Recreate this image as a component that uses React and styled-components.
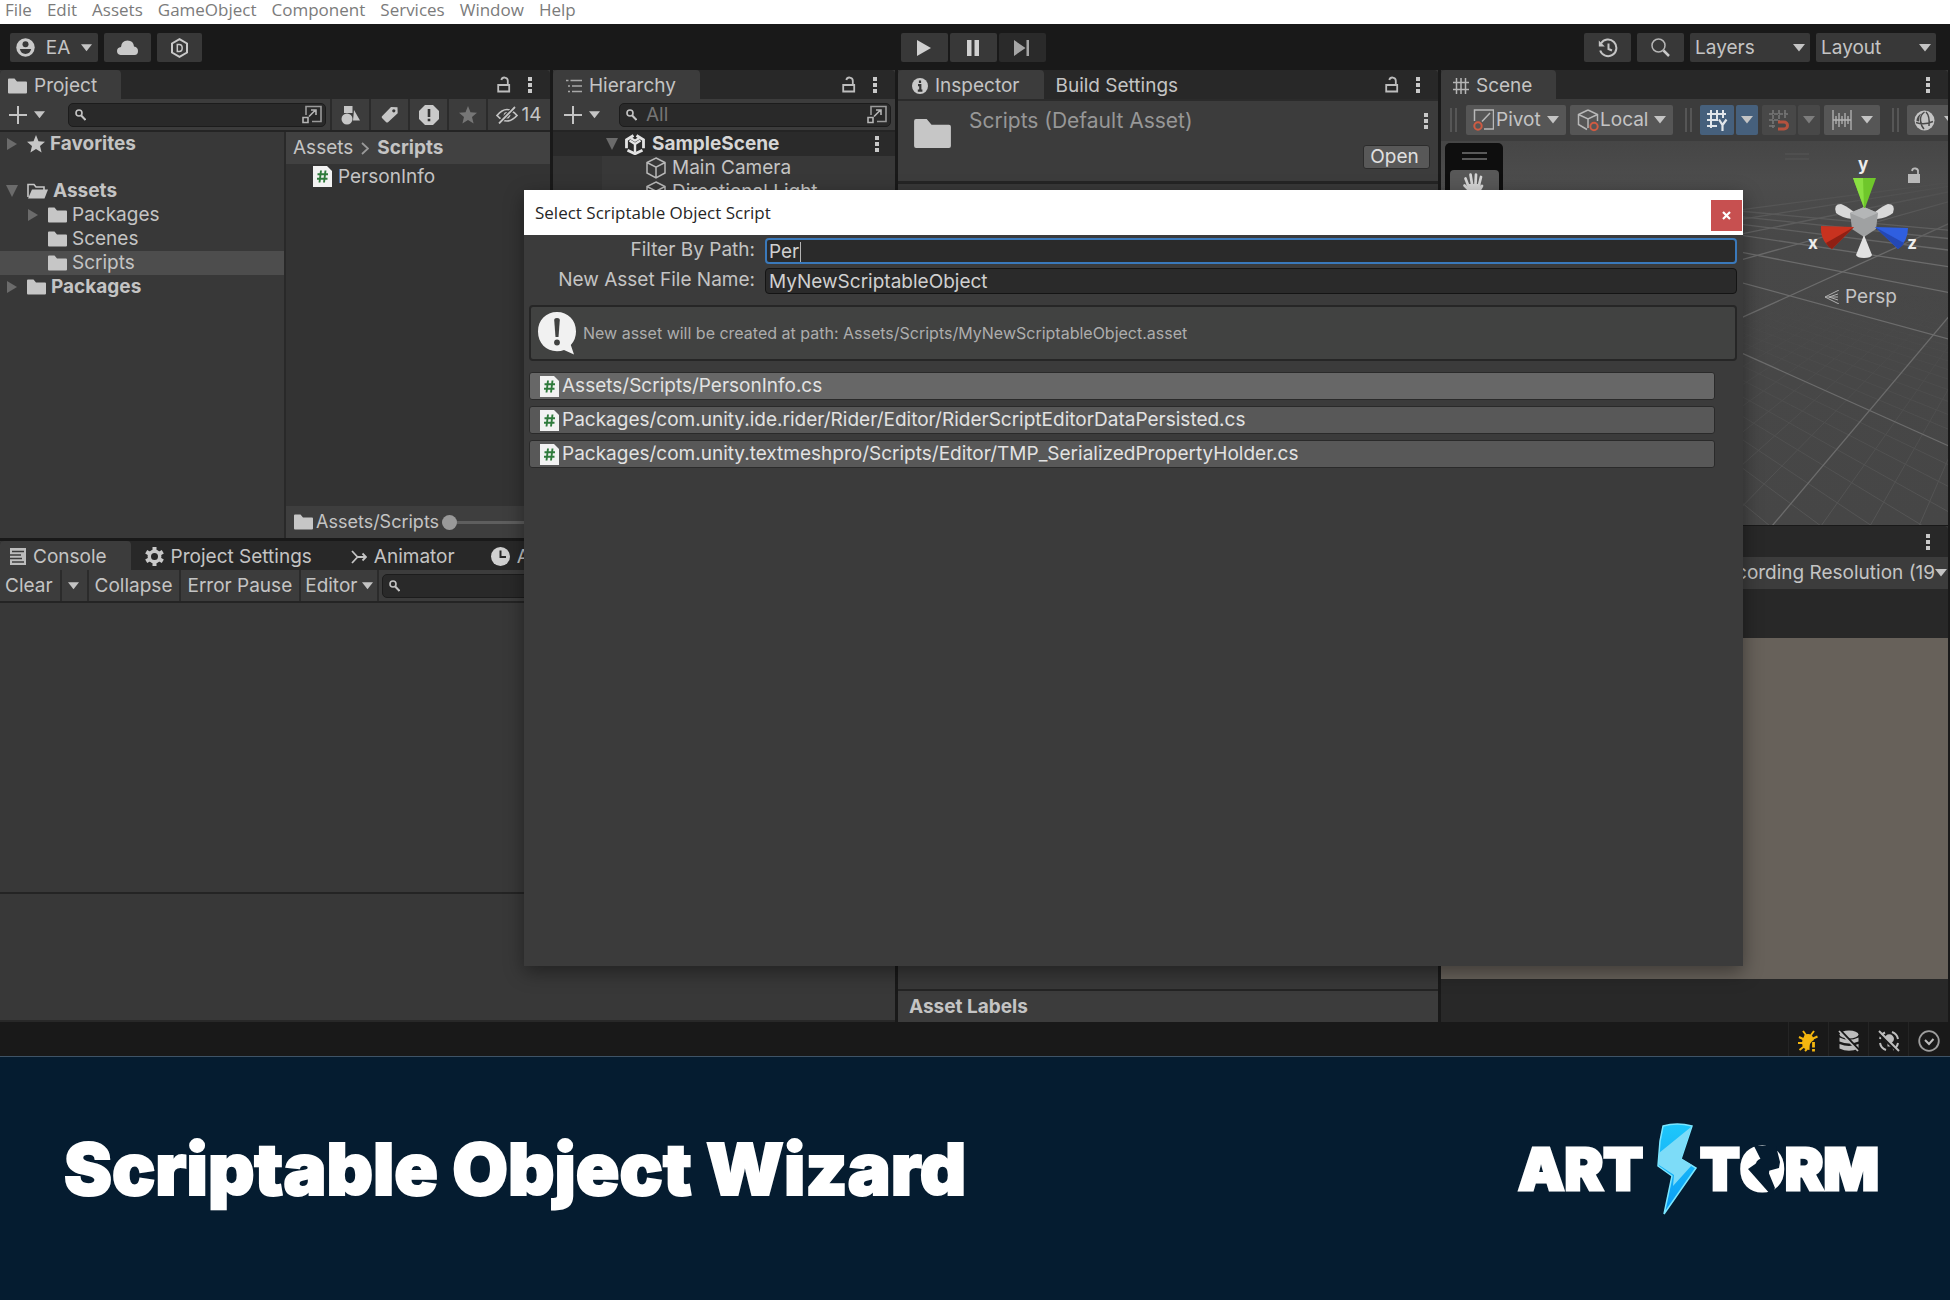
import React, { useState } from "react";
import styled, { createGlobalStyle, css } from "styled-components";

const GlobalStyle = createGlobalStyle`
  * {
    box-sizing: border-box;
  }
  body {
    margin: 0;
    background: #051c30;
    color: #c4c4c4;
    font-family: Inter, "Liberation Sans", sans-serif;
    font-size: 19px;
    line-height: 24px;
  }
  button,
  input,
  select {
    margin: 0;
    padding: 0;
    border: 0;
    background: none;
    color: inherit;
    font: inherit;
  }
  ul {
    margin: 0;
    padding: 0;
    list-style: none;
  }
  svg {
    display: block;
    flex: none;
  }
`;

/* ---------- icons ---------- */

const Icon = ({ w = 18, h = 18, box = "0 0 18 18", children, ...rest }) => (
  <svg width={w} height={h} viewBox={box} fill="none" aria-hidden="true" {...rest}>
    {children}
  </svg>
);

const Caret = ({ color = "#c4c4c4", w = 12 }) => (
  <Icon w={w} h={8} box="0 0 12 8">
    <path d="M0 0h12L6 7.5z" fill={color} />
  </Icon>
);

const Foldout = ({ open }) => (
  <Icon w={12} h={14} box="0 0 12 14">
    <path d={open ? "M0 1h12L6 13z" : "M1 1v12l10-6z"} fill="#6b6b6b" />
  </Icon>
);

const FolderIcon = ({ w = 19, h = 16 }) => (
  <Icon w={w} h={h} box="0 0 19 16">
    <path d="M0 1.500Q0 .5 1 .5h5.500L9 3.500h9q1 0 1 1V14.500q0 1-1 1H1q-1 0-1-1z" fill="#c6c6c6" />
  </Icon>
);

const FolderOpenIcon = () => (
  <Icon w={21} h={16} box="0 0 21 16">
    <path d="M1 14V1.500h6L9 4h8v3" stroke="#c6c6c6" strokeWidth="1.600" />
    <path d="M5 6.500h16L17.500 15.500H1z" fill="#c6c6c6" />
  </Icon>
);

const StarIcon = ({ color = "#c6c6c6" }) => (
  <Icon>
    <path d="M9 0l2.500 6.200 6.500.5-5 4.300 1.600 6.500L9 14l-5.600 3.500L5 11 0 6.700l6.500-.5z" fill={color} />
  </Icon>
);

const ScriptIcon = () => (
  <Icon w={19} h={21} box="0 0 19 21">
    <path d="M0 0h14l5 5v16H0z" fill="#f2f2f2" />
    <path d="M8 4.500L6.500 16.500M12.500 4.500L11 16.500M4.500 8.300h10.500M4 12.700h10.500" stroke="#2e7a3b" strokeWidth="1.900" />
  </Icon>
);

const LockIcon = () => (
  <Icon w={14} h={17} box="0 0 14 17">
    <path d="M1.200 9h11v6.500h-11zM10.800 9V4.800a3.300 3.300 0 0 0-6.500-.8" stroke="#bdbdbd" strokeWidth="1.800" />
  </Icon>
);

const DotsIcon = () => (
  <Icon w={4} h={18} box="0 0 4 18">
    <path d="M0 1h4v4H0zM0 7h4v4H0zM0 13h4v4H0z" fill="#c9c9c9" />
  </Icon>
);

const PlusIcon = () => (
  <Icon>
    <path d="M9 0v18M0 9h18" stroke="#c4c4c4" strokeWidth="2" />
  </Icon>
);

const SearchIcon = () => (
  <Icon w={11} h={12} box="0 0 11 12">
    <circle cx="4" cy="4" r="3" stroke="#c4c4c4" strokeWidth="1.600" />
    <path d="M6.200 6.500L10.500 11" stroke="#c4c4c4" strokeWidth="2" />
  </Icon>
);

const PopoutIcon = () => (
  <Icon w={20} h={19} box="0 0 20 19">
    <path d="M4 10V1.500h15v15h-9" stroke="#9a9a9a" strokeWidth="1.600" />
    <path d="M1 12.500h5v5H1zM7 11.500l6.500-6.500M9 5h5v5" stroke="#b5b5b5" strokeWidth="1.600" />
  </Icon>
);

const UserIcon = () => (
  <Icon w={19} h={19} box="0 0 19 19">
    <circle cx="9.500" cy="9.500" r="9.200" fill="#c9c9c9" />
    <circle cx="9.500" cy="6.200" r="3" fill="#383838" />
    <path d="M3.800 11h11.400c-.6 3.200-2.800 4.900-5.700 4.900S4.400 14.200 3.800 11z" fill="#383838" />
  </Icon>
);

const CloudIcon = () => (
  <Icon w={21} h={15} box="0 0 21 15">
    <path d="M3.500 15Q0 14.500 0 11t4-4Q4.500.5 10.500.5T17 6.500q4 .5 4 4.500t-3.500 4z" fill="#c9c9c9" />
  </Icon>
);

const DevOpsIcon = () => (
  <Icon w={19} h={20} box="0 0 19 20">
    <path d="M9.500 1.200l7.500 4.300v9l-7.500 4.300L2 14.500v-9z" stroke="#c9c9c9" strokeWidth="2" />
    <path d="M7.300 6.500h1.900q3 0 3 3.500t-3 3.500H7.300z" stroke="#c9c9c9" strokeWidth="1.500" />
  </Icon>
);

const PlayIcon = () => (
  <Icon w={14} h={16} box="0 0 14 16">
    <path d="M0 0l14 8-14 8z" fill="#d0d0d0" />
  </Icon>
);

const PauseIcon = () => (
  <Icon w={14} h={16} box="0 0 14 16">
    <path d="M1 0h4.500v16H1zM8.500 0H13v16H8.500z" fill="#d0d0d0" />
  </Icon>
);

const StepIcon = () => (
  <Icon w={16} h={16} box="0 0 16 16">
    <path d="M0 0l11.500 8L0 16zM12.500 0H15v16h-2.500z" fill="#a5a5a5" />
  </Icon>
);

const HistoryIcon = () => (
  <Icon w={20} h={20} box="0 0 20 20">
    <path d="M3 5.500a8.300 8.300 0 1 1-.8 7" stroke="#c4c4c4" strokeWidth="2" />
    <path d="M.8 2.500v6h6z" fill="#c4c4c4" />
    <path d="M10.500 5.500V11l3.500 1.500" stroke="#c4c4c4" strokeWidth="2" />
  </Icon>
);

const BigSearchIcon = () => (
  <Icon w={19} h={19} box="0 0 19 19">
    <circle cx="7.500" cy="7.500" r="6.500" stroke="#b5b5b5" strokeWidth="1.500" />
    <path d="M12.500 12.500l5.500 5.500" stroke="#c9c9c9" strokeWidth="2.500" />
  </Icon>
);

const ShapesIcon = () => (
  <Icon w={19} h={20} box="0 0 19 20">
    <path d="M3 1h8.500v7H3zM13 5l6 10.500h-7z" fill="#c6c6c6" />
    <circle cx="6" cy="14" r="5.500" fill="#c6c6c6" />
  </Icon>
);

const TagIcon = () => (
  <Icon w={17} h={17} box="0 0 17 17">
    <path d="M10 1l6.500.2.2 6L7 16.200q-1 .6-1.800 0L1 12q-.7-1 0-1.700z" fill="#c6c6c6" />
    <circle cx="12.800" cy="4.800" r="1.600" fill="#383838" />
  </Icon>
);

const AlertIcon = () => (
  <Icon w={20} h={20} box="0 0 20 20">
    <path d="M6 0h8l6 6v8l-6 6H6l-6-6V6z" fill="#c9c9c9" />
    <path d="M10 4v8M10 13.700v2.600" stroke="#333" strokeWidth="2.600" />
  </Icon>
);

const EyeOffIcon = () => (
  <Icon w={22} h={18} box="0 0 22 18">
    <path d="M1 9.500Q6 3.500 11 3.500t10 6q-5 5.500-10 5.500t-10-5.500z" stroke="#c4c4c4" strokeWidth="1.700" />
    <circle cx="11" cy="9.300" r="3.300" fill="#c4c4c4" />
    <path d="M3 17L19 1" stroke="#383838" strokeWidth="4" />
    <path d="M3 17.500L19 1" stroke="#c4c4c4" strokeWidth="1.800" />
  </Icon>
);

const ListIcon = () => (
  <Icon w={16} h={14} box="0 0 16 14">
    <path d="M0 1.500h2.500M4.500 1.500H16M2 7h2M6 7h10M2 12.500h2M6 12.500h10" stroke="#a8a8a8" strokeWidth="1.500" />
  </Icon>
);

const UnityIcon = () => (
  <Icon w={20} h={21} box="0 0 20 21">
    <path
      d="M8.500 1.500L1.500 5.700v8.500M11.500 1.500l7 4.200v8.500M2.500 16.200l7.500 3.600 7.500-3.600"
      stroke="#e4e4e4"
      strokeWidth="2.800"
    />
    <path d="M4.500 6.500L10 10v8M15.500 6.500L10 10M6 4.200l4 2.500 4-2.500" stroke="#e4e4e4" strokeWidth="2.400" />
  </Icon>
);

const CubeIcon = () => (
  <Icon w={20} h={22} box="0 0 20 22">
    <path d="M10 1l9 4.500v10.500L10 21l-9-5V5.500zM1 5.500l9 4.700 9-4.700M10 10.200V21" stroke="#b8b8b8" strokeWidth="1.500" />
  </Icon>
);

const InfoIcon = () => (
  <Icon w={16} h={16} box="0 0 16 16">
    <circle cx="8" cy="8" r="8" fill="#c9c9c9" />
    <path d="M8 2.500v2.600M6 7.200h2.300v5M5.800 12.600h4.600" stroke="#333" strokeWidth="2.200" />
  </Icon>
);

const HashIcon = () => (
  <Icon w={16} h={16} box="0 0 16 16">
    <path d="M3.500 0v16M8 0v16M12.500 0v16M0 4.500h16M0 11.500h16" stroke="#b5b5b5" strokeWidth="1.500" />
  </Icon>
);

const PivotIcon = () => (
  <Icon w={21} h={22} box="0 0 21 22">
    <path d="M1.500 12V1h19v19H11M9 12.500l8-8.500" stroke="#b8b8b8" strokeWidth="1.500" />
    <circle cx="5" cy="17" r="3.700" stroke="#cf5b42" strokeWidth="2" />
  </Icon>
);

const LocalIcon = () => (
  <Icon w={22} h={23} box="0 0 22 23">
    <path d="M11 1l9.500 4.500V12M11 1L1.500 5.500v10L10 20.500M1.500 5.500L11 10l9.500-4.500M11 10v9" stroke="#b8b8b8" strokeWidth="1.500" />
    <circle cx="17" cy="17.500" r="3.700" stroke="#cf5b42" strokeWidth="2" />
  </Icon>
);

const GridYIcon = () => (
  <Icon w={21} h={21} box="0 0 21 21">
    <path d="M4 0v18M10 0v11M16 0v8M0 4h19M0 10h11M0 16h10" stroke="#e2e6ea" strokeWidth="2" />
    <path d="M12 9.500l3.500 5.500 4-5.500M15.500 15v6" stroke="#e2e6ea" strokeWidth="2.200" />
  </Icon>
);

const MagnetIcon = () => (
  <Icon w={21} h={21} box="0 0 21 21">
    <path d="M4 0v18M10 0v11M16 0v8M0 4h19M0 10h9M0 16h6" stroke="#777" strokeWidth="1.600" strokeDasharray="4 1" />
    <path d="M9 12h6a3.500 3.500 0 0 1 0 7H9" stroke="#b5523e" strokeWidth="3" />
  </Icon>
);

const RulerIcon = () => (
  <Icon w={20} h={20} box="0 0 20 20">
    <path d="M1 0v20M19 0v20M4 6v8M7 3v14M10 6v8M13 3v14M16 6v8M1 10h18" stroke="#b5b5b5" strokeWidth="1.300" />
  </Icon>
);

const GlobeIcon = () => (
  <Icon w={21} h={21} box="0 0 21 21">
    <circle cx="10.500" cy="10.500" r="10" fill="#c4c4c4" />
    <path
      d="M10.500 2Q6 5 6.500 10.500T10 19M2 12.500q8 3 17-1M12 2q4 4 3 14"
      stroke="#4a4a4a"
      strokeWidth="1.500"
    />
    <path d="M2.500 11a8.500 8.500 0 0 1 5-7.500Q5 6 5 11.500z" fill="#4a4a4a" />
  </Icon>
);

const HandIcon = () => (
  <Icon w={24} h={26} box="0 0 24 26">
    <path
      d="M6 13L3.500 6.500M10 12L8.500 2.500M13.500 12l.5-9.500M17 13l2-8M7 18l-4.500-4.500M20 14l-3 5"
      stroke="#d5d5d5"
      strokeWidth="2.700"
      strokeLinecap="round"
    />
    <path d="M4.500 12h13.700l1 3.500L16 24H9z" fill="#d5d5d5" />
  </Icon>
);

const ConsoleIcon = () => (
  <Icon w={16} h={17} box="0 0 16 17">
    <path d="M0 0h16v17H0z" fill="#bdbdbd" />
    <path d="M2 3.500h12M0 7h11M0 10.500h12M2 14h12" stroke="#3c3c3c" strokeWidth="1.500" />
  </Icon>
);

const GearIcon = () => (
  <Icon w={19} h={19} box="0 0 19 19">
    <circle cx="9.500" cy="9.500" r="5.200" stroke="#c9c9c9" strokeWidth="3.400" />
    <path
      d="M9.500 0v3.500M9.500 15.500V19M1.200 4.700l3 1.800M14.800 12.500l3 1.800M1.200 14.300l3-1.800M14.800 6.500l3-1.800"
      stroke="#c9c9c9"
      strokeWidth="4"
    />
  </Icon>
);

const AnimatorIcon = () => (
  <Icon w={16} h={14} box="0 0 16 14">
    <path d="M1 1l5.500 6L1 13M6.500 7H15M11.500 3.500L15 7l-3.500 3.500" stroke="#c4c4c4" strokeWidth="1.800" />
  </Icon>
);

const ClockIcon = () => (
  <Icon w={19} h={19} box="0 0 19 19">
    <circle cx="9.500" cy="9.500" r="9.500" fill="#d0d0d0" />
    <path d="M9.500 3.500v6.500H15" stroke="#282828" strokeWidth="2" />
  </Icon>
);

const BubbleIcon = () => (
  <Icon w={40} h={44} box="0 0 40 44">
    <path d="M20 1C31 1 39 9 39 20.500q0 8-5.200 13.500L37 43.500l-10-4.500q-3 1.200-7 1.200C9 40.200 1 32 1 20.500S9 1 20 1z" fill="#f1f1f1" />
    <path d="M17.200 9q0-2 2.800-2t2.800 2L21.500 26h-3z" fill="#414241" />
    <circle cx="20" cy="31.500" r="2.900" fill="#414241" />
  </Icon>
);

const BugIcon = () => (
  <Icon w={21} h={22} box="0 0 21 22">
    <path d="M6 6.500Q6 4 10 4t4.500 2.500L16 10q-5 2-4.500 10Q4 20 4 12.500 4 9 6 6.500z" fill="#f5b70f" />
    <path d="M5 1l3 4M16 1l-3 4M1 7l5 2.500M19.500 6.500L14 9M0 13h5M1.500 20L6 16.500M7 21l2-2" stroke="#f5b70f" strokeWidth="2" />
    <path d="M15.500 12v5.500M15.500 19v2.500" stroke="#f5b70f" strokeWidth="2.800" />
  </Icon>
);

const DatabaseOffIcon = () => (
  <Icon w={22} h={22} box="0 0 22 22">
    <ellipse cx="11" cy="4.500" rx="9.500" ry="4" fill="#bdbdbd" />
    <path d="M1.500 7.500q9.500 4.500 19 0v4q-9.500 4-19 0zM1.500 14q9.500 4 19 0v4.500q-9.500 4.500-19 0z" fill="#bdbdbd" />
    <path d="M3 1l19 20" stroke="#191919" strokeWidth="2.500" />
    <path d="M1 1L20 21" stroke="#bdbdbd" strokeWidth="1.800" />
  </Icon>
);

const LightOffIcon = () => (
  <Icon w={22} h={22} box="0 0 22 22">
    <path d="M2 9a9.200 9.200 0 0 1 5-6.500M14 2a9.200 9.200 0 0 1 6 7M20 13a9.200 9.200 0 0 1-5 6.500M8 20a9.200 9.200 0 0 1-6-7" stroke="#bdbdbd" strokeWidth="2" />
    <path d="M6.500 9a4.700 4.700 0 0 1 9.500 0q0 2.500-2.500 4v3.500h-4V13q-3-1.500-3-4z" fill="#bdbdbd" />
    <path d="M0 3l19 18" stroke="#191919" strokeWidth="2.500" />
    <path d="M1 1l20 20" stroke="#bdbdbd" strokeWidth="2" />
  </Icon>
);

const CheckIcon = () => (
  <Icon w={22} h={22} box="0 0 22 22">
    <circle cx="11" cy="11" r="9.800" stroke="#9d9d9d" strokeWidth="1.800" />
    <path d="M7 10l4 4 4.500-5" stroke="#bdbdbd" strokeWidth="2" />
  </Icon>
);

const PerspIcon = () => (
  <Icon w={17} h={14} box="0 0 17 14">
    <path d="M15 0L1 7l14 7M1 7h13M5 7l9-3M5 7l9 3" stroke="#b0b0b0" strokeWidth="1" />
  </Icon>
);

/* ---------- shell ---------- */

const Page = styled.div`
  display: flex;
  flex-direction: column;
  min-height: 100vh;
`;

const Editor = styled.div`
  position: relative;
  display: flex;
  flex: 1;
  flex-direction: column;
  min-height: 900px;
  background: #191919;
  border-bottom: 1px solid #3f5366;
`;

const MenuBar = styled.nav`
  display: flex;
  gap: 15px;
  height: 24px;
  padding-left: 5px;
  background: #fff;
  color: #7b7b7b;
  font-family: "Open Sans", "Noto Sans", sans-serif;
  font-size: 17px;
  line-height: 20px;
`;

const MenuItem = styled.button`
  height: 20px;
`;

const MainToolbar = styled.div`
  display: grid;
  grid-template-columns: 1fr auto 1fr;
  align-items: center;
  height: 46px;
  padding: 1px 14px 0 10px;
`;

const ToolGroup = styled.div`
  display: flex;
  gap: ${(p) => p.$gap || 6}px;
  justify-content: ${(p) => (p.$end ? "flex-end" : "flex-start")};
`;

const ToolButton = styled.button`
  display: flex;
  align-items: center;
  justify-content: center;
  gap: 11px;
  width: ${(p) => p.$width}px;
  height: 29px;
  border-radius: 2px;
  background: ${(p) => (p.$dim ? "#2a2a2a" : "#383838")};
`;

/* select and caret share one grid cell */
const SelectFrame = styled.span`
  display: inline-grid;
  flex: none;
  align-items: center;
  width: ${(p) => p.$width}px;
  height: ${(p) => p.$height || 29}px;
  padding: 0 ${(p) => p.$pad || 0}px;
  border-radius: 2px;
  background: ${(p) => p.$bg || "transparent"};

  > * {
    grid-area: 1 / 1;
  }
  > svg {
    justify-self: start;
    pointer-events: none;
  }
  > svg:last-child {
    justify-self: end;
  }
`;

const Select = styled.select`
  width: 100%;
  height: 24px;
  padding-left: ${(p) => p.$indent || 0}px;
  padding-right: 12px;
  appearance: none;
  outline: none;
  overflow: hidden;
`;

const Dropdown = ({ label, value, icon, indent, caret, ...frame }) => (
  <SelectFrame {...frame}>
    <Select aria-label={label} $indent={indent} defaultValue={value}>
      <option>{value}</option>
    </Select>
    {icon}
    <Caret w={caret} />
  </SelectFrame>
);

const Workspace = styled.div`
  display: grid;
  flex: 1;
  grid-template-columns: minmax(0, 895fr) minmax(0, 540fr) minmax(0, 507fr);
  gap: 3px;
  min-height: 0;
  padding-right: 2px;
`;

const LeftDock = styled.div`
  display: grid;
  grid-template-columns: minmax(0, 550fr) minmax(0, 342fr);
  grid-template-rows: minmax(0, 468fr) minmax(0, 481fr);
  gap: 3px;
`;

const RightDock = styled.div`
  display: grid;
  grid-template-rows: minmax(0, 455fr) minmax(0, 496fr);
  gap: 1px;
`;

const Panel = styled.section`
  display: flex;
  flex-direction: column;
  min-width: 0;
  min-height: 0;
  overflow: hidden;
  background: #383838;
  ${(p) =>
    p.$wide &&
    css`
      grid-column: 1 / -1;
    `}
`;

const TabBar = styled.div`
  display: flex;
  align-items: stretch;
  flex: none;
  height: ${(p) => (p.$tall ? 31 : 29)}px;
  padding-right: 18px;
  border-radius: 4px 4px 0 0;
  background: #282828;
`;

const Tab = styled.button`
  display: flex;
  align-items: center;
  flex: none;
  gap: 7px;
  padding: 2px ${(p) => p.$right || 24}px 0 ${(p) => p.$left || 8}px;
  border-radius: 4px 4px 0 0;
  background: ${(p) => (p.$active ? "#3c3c3c" : "transparent")};
  white-space: nowrap;
`;

const TabActions = styled.div`
  display: flex;
  align-items: center;
  gap: 17px;
  margin-left: auto;
`;

const PlainButton = styled.button`
  display: flex;
  align-items: center;
  gap: 7px;
`;

const PanelToolbar = styled.div`
  display: flex;
  align-items: center;
  flex: none;
  height: 33px;
  padding-left: ${(p) => p.$left || 0}px;
  padding-right: ${(p) => p.$right || 0}px;
  border-bottom: 2px solid #242424;
  background: #3c3c3c;
`;

const SearchBox = styled.div`
  display: flex;
  align-items: center;
  flex: 1;
  gap: 9px;
  min-width: 0;
  height: 24px;
  margin: 0 ${(p) => p.$right || 0}px 0 ${(p) => p.$left || 0}px;
  padding: 0 3px 0 6px;
  border: 1px solid #1c1c1c;
  border-radius: 5px;
  background: #292929;

  input {
    flex: 1;
    min-width: 0;
    outline: none;
  }
  input::placeholder {
    color: #757575;
    opacity: 1;
  }
`;

const ToolCell = styled.button`
  display: flex;
  align-items: center;
  justify-content: center;
  gap: 3px;
  flex: none;
  width: ${(p) => p.$width || 39}px;
  height: 31px;
  border-left: 2px solid #2b2b2b;
`;

const ActionButton = ({ label, children, ...rest }) => (
  <PlainButton type="button" aria-label={label} {...rest}>
    {children}
  </PlainButton>
);

/* ---------- project ---------- */

const ProjectBody = styled.div`
  display: grid;
  grid-template-columns: 286px minmax(0, 1fr);
  flex: 1;
  min-height: 0;
`;

const Tree = styled.ul`
  border-right: 2px solid #292929;
`;

const TreeRow = styled.li`
  display: flex;
  align-items: center;
  gap: 5px;
  height: 24px;
  margin-top: ${(p) => (p.$spaced ? 23 : 0)}px;
  padding-left: ${(p) => 6 + (p.$depth || 0) * 21}px;
  background: ${(p) => (p.$selected ? "#4d4d4d" : "transparent")};
  font-weight: ${(p) => (p.$bold ? 700 : 400)};
`;

const FoldSlot = styled.span`
  width: 12px;
  margin-right: 4px;
`;

const Column = styled.div`
  display: flex;
  flex-direction: column;
  min-width: 0;
`;

const Breadcrumbs = styled.div`
  display: flex;
  align-items: center;
  gap: 8px;
  height: 32px;
  padding-left: 7px;
  background: #414141;
`;

const FileList = styled.ul`
  flex: 1;
  background: #333;
`;

const FileRow = styled.li`
  display: flex;
  align-items: center;
  gap: 6px;
  height: 25px;
  padding-left: 27px;
`;

const PathBar = styled.div`
  display: flex;
  align-items: center;
  gap: 3px;
  height: 32px;
  padding: 0 8px;
  background: #3e3e3e;
  font-size: 18px;
  white-space: nowrap;
`;

const ZoomSlider = styled.input`
  flex: 1;
  min-width: 0;
  height: 16px;
  appearance: none;

  &::-webkit-slider-runnable-track {
    height: 3px;
    background: #5e5e5e;
  }
  &::-webkit-slider-thumb {
    width: 15px;
    height: 15px;
    margin-top: -6px;
    appearance: none;
    border-radius: 50%;
    background: #999;
  }
`;

const TREE = [
  { name: "Favorites", icon: <StarIcon />, fold: "closed", bold: true },
  { name: "Assets", icon: <FolderOpenIcon />, fold: "open", bold: true, spaced: true },
  { name: "Packages", icon: <FolderIcon />, fold: "closed", depth: 1 },
  { name: "Scenes", icon: <FolderIcon />, depth: 1 },
  { name: "Scripts", icon: <FolderIcon />, depth: 1, selected: true },
  { name: "Packages", icon: <FolderIcon />, fold: "closed", bold: true },
];

const ProjectPanel = () => (
  <Panel>
    <TabBar>
      <Tab type="button" $active>
        <FolderIcon />
        Project
      </Tab>
      <TabActions>
        <ActionButton label="Lock project">
          <LockIcon />
        </ActionButton>
        <ActionButton label="Project menu">
          <DotsIcon />
        </ActionButton>
      </TabActions>
    </TabBar>
    <PanelToolbar $left={9}>
      <ActionButton label="Create asset">
        <PlusIcon />
        <Caret w={11} />
      </ActionButton>
      <SearchBox $left={23} $right={4}>
        <SearchIcon />
        <input type="search" aria-label="Search project" />
        <PopoutIcon />
      </SearchBox>
      <ToolCell type="button" aria-label="Search by type">
        <ShapesIcon />
      </ToolCell>
      <ToolCell type="button" aria-label="Search by label">
        <TagIcon />
      </ToolCell>
      <ToolCell type="button" aria-label="Search by import log">
        <AlertIcon />
      </ToolCell>
      <ToolCell type="button" aria-label="Save search">
        <StarIcon color="#767676" />
      </ToolCell>
      <ToolCell type="button" $width={64}>
        <EyeOffIcon />
        14
      </ToolCell>
    </PanelToolbar>
    <ProjectBody>
      <Tree>
        {TREE.map((row, i) => (
          <TreeRow key={i} $depth={row.depth} $bold={row.bold} $spaced={row.spaced} $selected={row.selected}>
            <FoldSlot>{row.fold && <Foldout open={row.fold === "open"} />}</FoldSlot>
            {row.icon}
            {row.name}
          </TreeRow>
        ))}
      </Tree>
      <Column>
        <Breadcrumbs>
          <span>Assets</span>
          <Icon w={8} h={13} box="0 0 8 13">
            <path d="M1 1l6 5.500L1 12" stroke="#9a9a9a" strokeWidth="1.800" />
          </Icon>
          <strong>Scripts</strong>
        </Breadcrumbs>
        <FileList>
          <FileRow>
            <ScriptIcon />
            PersonInfo
          </FileRow>
        </FileList>
        <PathBar>
          <FolderIcon />
          Assets/Scripts
          <ZoomSlider type="range" aria-label="Icon size" min="0" max="100" defaultValue="0" />
        </PathBar>
      </Column>
    </ProjectBody>
  </Panel>
);

/* ---------- hierarchy ---------- */

const SceneRow = styled.div`
  display: flex;
  align-items: center;
  gap: 7px;
  height: 24px;
  padding: 0 16px 0 53px;
  background: #2a2a2a;
  color: #d6d6d6;
  font-weight: 700;

  > button {
    margin-left: auto;
  }
`;

const ObjectRow = styled.li`
  display: flex;
  align-items: center;
  gap: 6px;
  height: 24px;
  padding-left: 44px;
  border-left: 49px solid #333;
`;

const HierarchyPanel = () => (
  <Panel>
    <TabBar>
      <Tab type="button" $active $left={13}>
        <ListIcon />
        Hierarchy
      </Tab>
      <TabActions>
        <ActionButton label="Lock hierarchy">
          <LockIcon />
        </ActionButton>
        <ActionButton label="Hierarchy menu">
          <DotsIcon />
        </ActionButton>
      </TabActions>
    </TabBar>
    <PanelToolbar $left={11} $right={4}>
      <ActionButton label="Create object">
        <PlusIcon />
        <Caret w={11} />
      </ActionButton>
      <SearchBox $left={19}>
        <SearchIcon />
        <input type="search" aria-label="Search hierarchy" placeholder="All" />
        <PopoutIcon />
      </SearchBox>
    </PanelToolbar>
    <SceneRow>
      <Foldout open />
      <UnityIcon />
      SampleScene
      <ActionButton label="Scene options">
        <DotsIcon />
      </ActionButton>
    </SceneRow>
    <ul>
      {["Main Camera", "Directional Light"].map((name) => (
        <ObjectRow key={name}>
          <CubeIcon />
          {name}
        </ObjectRow>
      ))}
    </ul>
  </Panel>
);

/* ---------- console ---------- */

const ConsoleButton = styled.button`
  flex: none;
  height: 31px;
  padding: 0 7px 0 ${(p) => (p.$first ? 0 : 6)}px;
  border-right: 2px solid #2b2b2b;
`;

const ClearMenu = styled.button`
  height: 24px;
  padding: 0 8px 0 6px;
`;

const Divider = styled.span`
  flex: none;
  width: 2px;
  height: 31px;
  background: #2b2b2b;
`;

const LogList = styled.div`
  flex: 291;
`;

const LogDetail = styled.div`
  flex: 127;
  border-top: 2px solid #242424;
  border-bottom: 2px solid #282828;
`;

const ConsolePanel = () => (
  <Panel $wide>
    <TabBar>
      <Tab type="button" $active $left={10}>
        <ConsoleIcon />
        Console
      </Tab>
      <Tab type="button" $left={14}>
        <GearIcon />
        Project Settings
      </Tab>
      <Tab type="button" $left={15}>
        <AnimatorIcon />
        Animator
      </Tab>
      <Tab type="button" $left={12}>
        <ClockIcon />
        Animation
      </Tab>
    </TabBar>
    <PanelToolbar $left={5} $right={4}>
      <ConsoleButton type="button" $first>
        Clear
      </ConsoleButton>
      <ClearMenu type="button" aria-label="Clear options">
        <Caret w={11} />
      </ClearMenu>
      <Divider />
      <ConsoleButton type="button">Collapse</ConsoleButton>
      <ConsoleButton type="button">Error Pause</ConsoleButton>
      <Dropdown label="Console target" value="Editor" caret={11} $width={76} $pad={4} />
      <Divider />
      <SearchBox $left={3}>
        <SearchIcon />
        <input type="search" aria-label="Search console" />
      </SearchBox>
    </PanelToolbar>
    <LogList />
    <LogDetail />
  </Panel>
);

/* ---------- inspector ---------- */

const AssetHeader = styled.div`
  display: grid;
  grid-template-columns: 37px 1fr auto;
  grid-template-rows: 24px 24px;
  align-content: start;
  column-gap: 18px;
  row-gap: 12px;
  height: 85px;
  padding: 8px 8px 0 16px;
  border-top: 2px solid #2b2b2b;
  border-bottom: 3px solid #242424;
  background: #3c3c3c;
`;

const AssetIcon = styled.div`
  grid-row: 1 / 3;
  padding-top: 9px;
`;

const AssetName = styled.div`
  color: #979797;
  font-size: 21px;
`;

const HeaderMenu = styled(ActionButton)`
  justify-self: end;
  margin-right: 2px;
`;

const OpenButton = styled.button`
  grid-column: 3;
  width: 67px;
  padding-right: 4px;
  border: 1px solid #2c2c2c;
  border-radius: 3px;
  background: #585858;
  color: #e0e0e0;
  line-height: 22px;
`;

const InspectorBody = styled.div`
  flex: 1;
`;

const AssetLabels = styled.h2`
  height: 33px;
  margin: 0;
  padding: 4px 11px;
  border-top: 2px solid #242424;
  background: #3c3c3c;
  font-size: 19px;
  font-weight: 700;
`;

const InspectorPanel = () => (
  <Panel>
    <TabBar>
      <Tab type="button" $active $left={14}>
        <InfoIcon />
        Inspector
      </Tab>
      <Tab type="button" $left={12}>
        Build Settings
      </Tab>
      <TabActions>
        <ActionButton label="Lock inspector">
          <LockIcon />
        </ActionButton>
        <ActionButton label="Inspector menu">
          <DotsIcon />
        </ActionButton>
      </TabActions>
    </TabBar>
    <AssetHeader>
      <AssetIcon>
        <FolderIcon w={37} h={31} />
      </AssetIcon>
      <AssetName>Scripts (Default Asset)</AssetName>
      <HeaderMenu label="Asset menu">
        <DotsIcon />
      </HeaderMenu>
      <OpenButton type="button">Open</OpenButton>
    </AssetHeader>
    <InspectorBody />
    <AssetLabels>Asset Labels</AssetLabels>
  </Panel>
);

/* ---------- scene and game ---------- */

const SceneToolbar = styled.div`
  display: flex;
  align-items: center;
  flex: none;
  gap: 4px;
  height: 42px;
  padding: 0 0 0 9px;
  overflow: hidden;
  background: #3c3c3c;
`;

const Grip = styled.span`
  flex: none;
  width: 7px;
  height: 24px;
  margin: 0 ${(p) => (p.$first ? 5 : 4)}px 0 ${(p) => (p.$first ? 0 : 8)}px;
  border: solid #565656;
  border-width: 0 2px;
`;

const Split = styled.div`
  display: flex;
  flex: none;
  gap: 2px;
  height: 30px;
`;

const SplitPart = styled.button`
  display: flex;
  align-items: center;
  justify-content: center;
  gap: 9px;
  width: ${(p) => p.$width}px;
  border-radius: 2px;
  background: ${(p) => (p.$on ? "#46607c" : p.$dim ? "#484848" : "#565656")};
`;

const Viewport = styled.div`
  position: relative;
  flex: 1;
  min-height: 0;
  overflow: hidden;
  background: #474747;
`;

const ViewCanvas = styled.svg`
  position: absolute;
  inset: 0;
  width: 100%;
  height: 100%;

  text {
    fill: #ececec;
    font-weight: 700;
    font-size: 17px;
    text-anchor: middle;
  }
`;

const ViewTools = styled.div`
  position: absolute;
  top: 2px;
  left: 4px;
  display: flex;
  flex-direction: column;
  align-items: center;
  gap: 10px;
  width: 58px;
  height: 120px;
  padding-top: 9px;
  border-radius: 5px;
  background: #0e0e0e;
`;

const ToolsGrip = styled.span`
  width: 25px;
  height: 8px;
  border: solid #5a5a5a;
  border-width: 2px 0;
`;

const HandButton = styled.button`
  display: flex;
  justify-content: center;
  width: 49px;
  height: 40px;
  padding-top: 2px;
  border-radius: 4px;
  background: #585858;
`;

const PerspButton = styled.button`
  position: absolute;
  top: 144px;
  right: 51px;
  display: flex;
  align-items: center;
  gap: 4px;
`;

// floor lines run to two vanishing points on the horizon
const floorLines = [];
for (let i = -10; i < 70; i += 1) {
  floorLines.push({ key: `a${i}`, x1: -96, y1: 34, x2: 686 + i * 51, y2: 385, major: i % 10 === 0 });
}
for (let i = -10; i < 60; i += 1) {
  floorLines.push({ key: `b${i}`, x1: 635, y1: 25, x2: 331 - i * 49, y2: 385, major: i % 10 === 0 });
}

const SceneCanvas = () => (
  <ViewCanvas viewBox="0 0 507 385" preserveAspectRatio="xMaxYMin slice" role="img" aria-label="Scene view">
    <defs>
      <linearGradient id="sky" x1="0" y1="0" x2="0" y2="1">
        <stop offset="0" stopColor="#464646" />
        <stop offset="0.1" stopColor="#4c4c4c" />
        <stop offset="0.25" stopColor="#484848" />
        <stop offset="1" stopColor="#464646" />
      </linearGradient>
      <linearGradient id="minorFade" x1="0" y1="0" x2="0" y2="1">
        <stop offset="0.4" stopColor="#000" />
        <stop offset="1" stopColor="#bbb" />
      </linearGradient>
      <linearGradient id="majorFade" x1="0" y1="0" x2="0" y2="1">
        <stop offset="0.1" stopColor="#000" />
        <stop offset="0.3" stopColor="#fff" />
      </linearGradient>
      <mask id="minorMask">
        <rect width="507" height="385" fill="url(#minorFade)" />
      </mask>
      <mask id="majorMask">
        <rect width="507" height="385" fill="url(#majorFade)" />
      </mask>
    </defs>
    <rect width="507" height="385" fill="url(#sky)" />
    <g mask="url(#minorMask)" stroke="#5c5c5c">
      {floorLines
        .filter((l) => !l.major)
        .map(({ key, major, ...l }) => (
          <line key={key} {...l} />
        ))}
    </g>
    <g mask="url(#majorMask)" stroke="#6c6c6c" strokeWidth="1.300">
      {floorLines
        .filter((l) => l.major)
        .map(({ key, major, ...l }) => (
          <line key={key} {...l} />
        ))}
    </g>
    <path d="M344 13h24M344 18h24" stroke="#515151" strokeWidth="1.500" />
    <path d="M395 72q-3-9 5-9 4 1 13 8l-2 7q-10-1-16-6z" fill="#d9d9d9" />
    <path d="M452 72q3-9-5-9-4 1-13 8l2 7q10-1 16-6z" fill="#d9d9d9" />
    <path d="M423 66l14 6-2 16-12 8-12-8-2-16z" fill="#9fa1a2" />
    <path d="M409 72l14-6 14 6-14 6z" fill="#b4b6b7" />
    <path d="M412 37h23l-11 30h-1z" fill="#6fc72b" />
    <path d="M412 37h10l1 30z" fill="#8adf42" />
    <path d="M423 94l8 20q-1 3-8 3t-8-3z" fill="#e2e2e2" />
    <path d="M413 86l-33-1q-1 15 11 23z" fill="#c8321f" />
    <path d="M413 86l-22 22q-4-2-6-6z" fill="#8f2014" />
    <path d="M434 86l33 1q0 13-10 21z" fill="#2f5fe0" />
    <path d="M434 86l23 22q5-3 6-6z" fill="#2448b5" />
    <path d="M467 33h12v9h-12z" fill="#b9b9b9" />
    <path d="M477 34v-3a3 3 0 0 0-6-1" stroke="#b9b9b9" strokeWidth="1.800" fill="none" />
    <text x="422" y="29">y</text>
    <text x="372" y="108">x</text>
    <text x="471" y="108">z</text>
  </ViewCanvas>
);

const ScenePanel = () => (
  <Panel>
    <TabBar>
      <Tab type="button" $active $left={12}>
        <HashIcon />
        Scene
      </Tab>
      <TabActions>
        <ActionButton label="Scene menu">
          <DotsIcon />
        </ActionButton>
      </TabActions>
    </TabBar>
    <SceneToolbar>
      <Grip $first />
      <Dropdown label="Tool handle position" value="Pivot" icon={<PivotIcon />} indent={23} $width={100} $height={30} $pad={7} $bg="#565656" />
      <Dropdown label="Tool handle rotation" value="Local" icon={<LocalIcon />} indent={23} $width={103} $height={30} $pad={7} $bg="#565656" />
      <Grip />
      <Split>
        <SplitPart type="button" aria-label="Grid snapping" $on $width={34}>
          <GridYIcon />
        </SplitPart>
        <SplitPart type="button" aria-label="Grid options" $on $width={22}>
          <Caret />
        </SplitPart>
      </Split>
      <Split>
        <SplitPart type="button" aria-label="Snap to grid" $dim $width={34}>
          <MagnetIcon />
        </SplitPart>
        <SplitPart type="button" aria-label="Snap options" $dim $width={22}>
          <Caret color="#7d7d7d" />
        </SplitPart>
      </Split>
      <Split>
        <SplitPart type="button" aria-label="Snap increment" $width={56}>
          <RulerIcon />
          <Caret />
        </SplitPart>
      </Split>
      <Grip />
      <Split>
        <SplitPart type="button" aria-label="Draw mode" $width={56}>
          <GlobeIcon />
          <Caret />
        </SplitPart>
      </Split>
    </SceneToolbar>
    <Viewport>
      <SceneCanvas />
      <ViewTools>
        <ToolsGrip />
        <HandButton type="button" aria-label="View tool">
          <HandIcon />
        </HandButton>
      </ViewTools>
      <PerspButton type="button">
        <PerspIcon />
        Persp
      </PerspButton>
    </Viewport>
  </Panel>
);

const GameBar = styled.div`
  display: flex;
  justify-content: flex-end;
  flex: none;
  height: 32px;
  background: #3c3c3c;
`;

const GameView = styled.div`
  display: grid;
  flex: 1;
  grid-template-rows: 49fr 341fr 43fr;
  background: #282828;
`;

const GameFrame = styled.div`
  grid-row: 2;
  background: #67615a;
`;

const GamePanel = () => (
  <Panel>
    <TabBar $tall>
      <TabActions>
        <ActionButton label="Game menu">
          <DotsIcon />
        </ActionButton>
      </TabActions>
    </TabBar>
    <GameBar>
      <Dropdown label="Game resolution" value="Recording Resolution (1920x1080)" $width={236} $height={32} $pad={1} />
    </GameBar>
    <GameView>
      <GameFrame />
    </GameView>
  </Panel>
);

const StatusBar = styled.footer`
  display: flex;
  justify-content: flex-end;
  flex: none;
  height: 34px;
  padding-right: 2px;
`;

const StatusButton = styled.button`
  display: flex;
  align-items: center;
  justify-content: center;
  width: 40px;
  padding-top: 3px;
  border-left: 1px solid #242424;
`;

/* ---------- script picker ---------- */

const Dialog = styled.div`
  position: absolute;
  top: 190px;
  right: 207px;
  bottom: 90px;
  left: 524px;
  background: #3b3b3b;
  box-shadow: 0 6px 18px rgba(0, 0, 0, 0.4);
`;

const DialogTitle = styled.header`
  display: flex;
  align-items: center;
  justify-content: space-between;
  height: 45px;
  padding: 0 1px 0 11px;
  background: #fff;
  color: #262626;
  font-family: "Open Sans", "Noto Sans", sans-serif;
  font-size: 17px;
`;

const CloseButton = styled.button`
  display: grid;
  align-self: flex-end;
  place-items: center;
  width: 31px;
  height: 31px;
  margin-bottom: 4px;
  background: #c75050;
`;

const DialogBody = styled.div`
  display: flex;
  flex-direction: column;
  gap: 11px;
  padding: 3px 6px 0 5px;
`;

const Fields = styled.form`
  display: grid;
  grid-template-columns: 226px 1fr;
  gap: 4px 10px;

  label {
    text-align: right;
  }
`;

const FieldFrame = styled.div`
  position: relative;
  display: grid;
`;

const TextField = styled.input`
  height: 26px;
  padding: 0 3px;
  border: 1px solid #141414;
  border-radius: 4px;
  background: #2a2a2a;
  color: #d0d0d0;
  outline: none;

  &:focus {
    padding: 0 2px;
    border: 2px solid #3a79bb;
  }
`;

const TextCursor = styled.span`
  position: absolute;
  top: 4px;
  bottom: 2px;
  left: 35px;
  width: 1px;
  background: #b4b4b4;
`;

const HelpBox = styled.div`
  display: flex;
  align-items: center;
  gap: 6px;
  height: 56px;
  padding-left: 6px;
  border: 2px solid #262626;
  border-radius: 4px;
  background: #414241;
  color: #adadad;
  font-size: 16px;
`;

const ScriptList = styled.ul`
  display: grid;
  gap: 6px;
  padding-right: 22px;
`;

const ScriptButton = styled.button`
  display: flex;
  align-items: center;
  gap: 3px;
  width: 100%;
  height: 28px;
  padding-left: 10px;
  border: 1px solid #2a2a2a;
  border-radius: 3px;
  background: ${(p) => (p.$hover ? "#676767" : "#585858")};
  color: #e2e2e2;
`;

const SCRIPTS = [
  "Assets/Scripts/PersonInfo.cs",
  "Packages/com.unity.ide.rider/Rider/Editor/RiderScriptEditorDataPersisted.cs",
  "Packages/com.unity.textmeshpro/Scripts/Editor/TMP_SerializedPropertyHolder.cs",
];

const ScriptPicker = () => {
  const [filter, setFilter] = useState("Per");
  const [touched, setTouched] = useState(false);
  const [fileName, setFileName] = useState("MyNewScriptableObject");
  const matches = SCRIPTS.filter((path) => path.toLowerCase().includes(filter.toLowerCase()));

  return (
    <Dialog role="dialog" aria-labelledby="picker-title">
      <DialogTitle>
        <span id="picker-title">Select Scriptable Object Script</span>
        <CloseButton type="button" aria-label="Close">
          <Icon w={9} h={9} box="0 0 9 9">
            <path d="M1 1l7 7M8 1L1 8" stroke="#fff" strokeWidth="2.200" />
          </Icon>
        </CloseButton>
      </DialogTitle>
      <DialogBody>
        <Fields onSubmit={(e) => e.preventDefault()}>
          <label htmlFor="filter">Filter By Path:</label>
          <FieldFrame>
            <TextField
              id="filter"
              autoFocus
              value={filter}
              onKeyDown={() => setTouched(true)}
              onChange={(e) => setFilter(e.target.value)}
            />
            {!touched && <TextCursor />}
          </FieldFrame>
          <label htmlFor="file-name">New Asset File Name:</label>
          <TextField id="file-name" value={fileName} onChange={(e) => setFileName(e.target.value)} />
        </Fields>
        <HelpBox>
          <BubbleIcon />
          New asset will be created at path: Assets/Scripts/{fileName}.asset
        </HelpBox>
        <ScriptList>
          {matches.map((path, i) => (
            <li key={path}>
              <ScriptButton type="button" $hover={i === 0}>
                <ScriptIcon />
                {path}
              </ScriptButton>
            </li>
          ))}
        </ScriptList>
      </DialogBody>
    </Dialog>
  );
};

/* ---------- banner ---------- */

const Banner = styled.section`
  display: flex;
  align-items: center;
  justify-content: space-between;
  flex: none;
  height: 243px;
  padding: 0 71px 20px 64px;
  background: #051c30;
  color: #fff;
  font-weight: 900;
`;

const BannerTitle = styled.h1`
  margin: 0;
  font-size: 72px;
  font-weight: 900;
  line-height: 80px;
  -webkit-text-stroke: 2px #fff;
`;

const Logo = styled.div`
  display: flex;
  align-items: center;
  font-size: 58px;
  line-height: 92px;
  -webkit-text-stroke: 3px #fff;
`;

const Bolt = styled.svg`
  margin: 0 3px 0 14px;
`;

const StormO = styled.span`
  position: relative;

  svg {
    position: absolute;
    top: 23px;
    left: 0;
  }
`;

const ArtStormLogo = () => (
  <Logo>
    ART
    <Bolt width="40" height="92" viewBox="0 0 40 92" aria-hidden="true">
      <defs>
        <linearGradient id="bolt" x1="0" y1="0" x2="0" y2="1">
          <stop offset="0" stopColor="#1fc8fb" />
          <stop offset="1" stopColor="#0a9cf5" />
        </linearGradient>
      </defs>
      <path d="M6 3q14-4 29 0L24 36l15 9L7 91l8-38L1 43 3 18z" fill="url(#bolt)" stroke="#7be6ff" strokeWidth="1.500" />
      <path d="M34 4L24 36l11 6-19 21 1-11L2 42v-12z" fill="#7ddcf8" />
    </Bolt>
    T
    <StormO>
      O
      <svg width="48" height="50" viewBox="0 0 48 50" aria-hidden="true">
        <path d="M14 0h22l4 16-1 6-11 3 7 17-4 7L8 23l13-9z" fill="#051c30" />
      </svg>
    </StormO>
    RM
  </Logo>
);

const MENUS = ["File", "Edit", "Assets", "GameObject", "Component", "Services", "Window", "Help"];

const App = () => (
  <>
    <GlobalStyle />
    <Page>
      <Editor>
        <MenuBar>
          {MENUS.map((name) => (
            <MenuItem key={name} type="button">
              {name}
            </MenuItem>
          ))}
        </MenuBar>
        <MainToolbar>
          <ToolGroup>
            <ToolButton type="button" $width={88}>
              <UserIcon />
              EA
              <Caret w={11} />
            </ToolButton>
            <ToolButton type="button" aria-label="Cloud" $width={47}>
              <CloudIcon />
            </ToolButton>
            <ToolButton type="button" aria-label="Version control" $width={45}>
              <DevOpsIcon />
            </ToolButton>
          </ToolGroup>
          <ToolGroup $gap={2}>
            <ToolButton type="button" aria-label="Play" $width={47}>
              <PlayIcon />
            </ToolButton>
            <ToolButton type="button" aria-label="Pause" $width={47}>
              <PauseIcon />
            </ToolButton>
            <ToolButton type="button" aria-label="Step" $dim $width={47}>
              <StepIcon />
            </ToolButton>
          </ToolGroup>
          <ToolGroup $end>
            <ToolButton type="button" aria-label="Undo history" $width={47}>
              <HistoryIcon />
            </ToolButton>
            <ToolButton type="button" aria-label="Search" $width={47}>
              <BigSearchIcon />
            </ToolButton>
            <Dropdown label="Layers" value="Layers" $width={120} $pad={5} $bg="#383838" />
            <Dropdown label="Layout" value="Layout" $width={120} $pad={5} $bg="#383838" />
          </ToolGroup>
        </MainToolbar>
        <Workspace>
          <LeftDock>
            <ProjectPanel />
            <HierarchyPanel />
            <ConsolePanel />
          </LeftDock>
          <InspectorPanel />
          <RightDock>
            <ScenePanel />
            <GamePanel />
          </RightDock>
        </Workspace>
        <StatusBar>
          <StatusButton type="button" aria-label="Debugger attached">
            <BugIcon />
          </StatusButton>
          <StatusButton type="button" aria-label="Cache server off">
            <DatabaseOffIcon />
          </StatusButton>
          <StatusButton type="button" aria-label="Auto lighting off">
            <LightOffIcon />
          </StatusButton>
          <StatusButton type="button" aria-label="Background tasks">
            <CheckIcon />
          </StatusButton>
        </StatusBar>
        <ScriptPicker />
      </Editor>
      <Banner>
        <BannerTitle>Scriptable Object Wizard</BannerTitle>
        <ArtStormLogo />
      </Banner>
    </Page>
  </>
);

export default App;
